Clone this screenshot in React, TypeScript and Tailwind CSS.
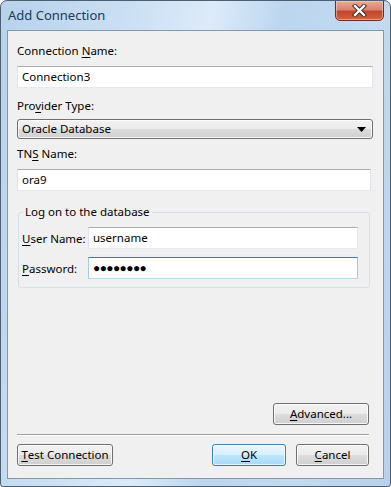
import React from "react";

const font = { fontFamily: '"Noto Sans", "Open Sans", sans-serif' };

function U({ children }: { children: React.ReactNode }) {
  return <span className="underline underline-offset-[2px] decoration-[1px]">{children}</span>;
}

function TextBox({ value, focused, className }: { value: React.ReactNode; focused?: boolean; className: string }) {
  return (
    <div
      className={
        "h-[22px] bg-white border flex items-center pl-[4px] text-[11.5px] text-black whitespace-nowrap " +
        (focused
          ? "border-t-[#3d7bad] border-l-[#a4c9e3] border-r-[#a4c9e3] border-b-[#b7d9ed] "
          : "border-t-[#abadb3] border-l-[#e2e3ea] border-r-[#e2e3ea] border-b-[#e3e9ef] ") +
        className
      }
    >
      {value}
    </div>
  );
}

function Button({ children, primary, className }: { children: React.ReactNode; primary?: boolean; className: string }) {
  return (
    <div
      className={
        "h-[22px] rounded-[3px] border flex items-center justify-center text-[11.5px] text-black whitespace-nowrap " +
        (primary
          ? "border-[#3c7fb1] bg-[linear-gradient(#eaf6fd_0%,#d9f0fc_50%,#bee6fd_50%,#a7d9f5_100%)] shadow-[inset_0_0_0_1px_rgba(255,255,255,0.7)] "
          : "border-[#707070] bg-[linear-gradient(#f2f2f2_0%,#ebebeb_50%,#dddddd_50%,#cfcfcf_100%)] shadow-[inset_0_0_0_1px_rgba(255,255,255,0.8)] ") +
        className
      }
    >
      {children}
    </div>
  );
}

export default function App() {
  return (
    <div
      className="w-[391px] h-[487px] rounded-t-[7px] rounded-b-[3px] border border-[#4d6072] flex flex-col overflow-hidden bg-[linear-gradient(100deg,#b7d2ec_0%,#c9def2_25%,#dcebf9_45%,#bcd6ef_60%,#c3daf0_80%,#b8d1ea_100%)]"
      style={font}
    >
      {/* title bar */}
      <div className="h-[29px] flex items-start relative shrink-0">
        <div className="pl-[7px] pt-[6px] text-[13px] leading-[17px] text-[#1e395b]">Add Connection</div>
        <div className="absolute right-[6px] top-[-1px] w-[49px] h-[21px] rounded-b-[5px] border border-[#6d2c22] bg-[linear-gradient(#eaa996_0%,#d98470_45%,#c2452c_55%,#d0643d_100%)] shadow-[inset_0_0_0_1px_rgba(255,220,210,0.5)] flex items-center justify-center">
          <svg width="15" height="13" viewBox="0 0 15 13">
            <path d="M3 2 L12 11 M12 2 L3 11" stroke="#3d2420" strokeWidth="4.2" strokeLinecap="square" />
            <path d="M3 2 L12 11 M12 2 L3 11" stroke="#ffffff" strokeWidth="2.4" strokeLinecap="square" />
          </svg>
        </div>
      </div>

      {/* client area */}
      <div className="flex-1 mx-[6px] mb-[7px] border border-[#8497ab] bg-[#f0f0f0] flex flex-col pl-[9px] text-[11.5px] text-black whitespace-nowrap">
        <div className="mt-[12px] h-[15px] leading-[15px]">
          Connection <U>N</U>ame:
        </div>
        <TextBox value="Connection3" className="mt-[8px] w-[356px]" />

        <div className="mt-[10px] h-[15px] leading-[15px]">
          Pro<U>v</U>ider Type:
        </div>
        <div className="mt-[6px] w-[356px] h-[20px] rounded-[3px] border border-[#707070] bg-[linear-gradient(#f2f2f2_0%,#ebebeb_50%,#dddddd_50%,#cfcfcf_100%)] shadow-[inset_0_0_0_1px_rgba(255,255,255,0.8)] flex items-center justify-between pl-[4px] pr-[6px]">
          <span>Oracle Database</span>
          <svg width="9" height="5" viewBox="0 0 9 5">
            <path d="M0 0 H9 L4.5 5 Z" fill="#000" />
          </svg>
        </div>

        <div className="mt-[7px] h-[15px] leading-[15px]">
          TN<U>S</U> Name:
        </div>
        <TextBox value="ora9" className="mt-[8px] w-[354px]" />

        {/* group box */}
        <div className="relative mt-[21px] ml-[1px] w-[352px] h-[76px] rounded-[3px] border border-[#d5dfe5] flex flex-col pl-[3px]">
          <div className="absolute left-[4px] top-[-9px] px-[2px] bg-[#f0f0f0] h-[15px] leading-[15px]">
            Log on to the database
          </div>
          <div className="mt-[14px] flex items-center">
            <div className="w-[66px] leading-[15px]">
              <U>U</U>ser Name:
            </div>
            <TextBox value="username" className="w-[270px]" />
          </div>
          <div className="mt-[8px] flex items-center">
            <div className="w-[66px] leading-[15px]">
              <U>P</U>assword:
            </div>
            <TextBox
              focused
              value={<span className="text-[12px] tracking-[-0.6px] leading-none">●●●●●●●●</span>}
              className="w-[270px]"
            />
          </div>
        </div>

        <div className="flex-1" />
        <div className="flex justify-end w-[352px]">
          <Button className="w-[96px] h-[21px]">
            <U>A</U>dvanced...
          </Button>
        </div>
        <div className="mt-[9px] w-[352px] h-[2px] border-t border-t-[#a0a0a0] border-b border-b-white" />
        <div className="mt-[8px] mb-[12px] w-[352px] flex items-center">
          <Button className="w-[96px]">
            <U>T</U>est Connection
          </Button>
          <div className="flex-1" />
          <Button primary className="w-[74px]">
            <U>O</U>K
          </Button>
          <Button className="w-[73px] ml-[10px]">
            <U>C</U>ancel
          </Button>
        </div>
      </div>
    </div>
  );
}
